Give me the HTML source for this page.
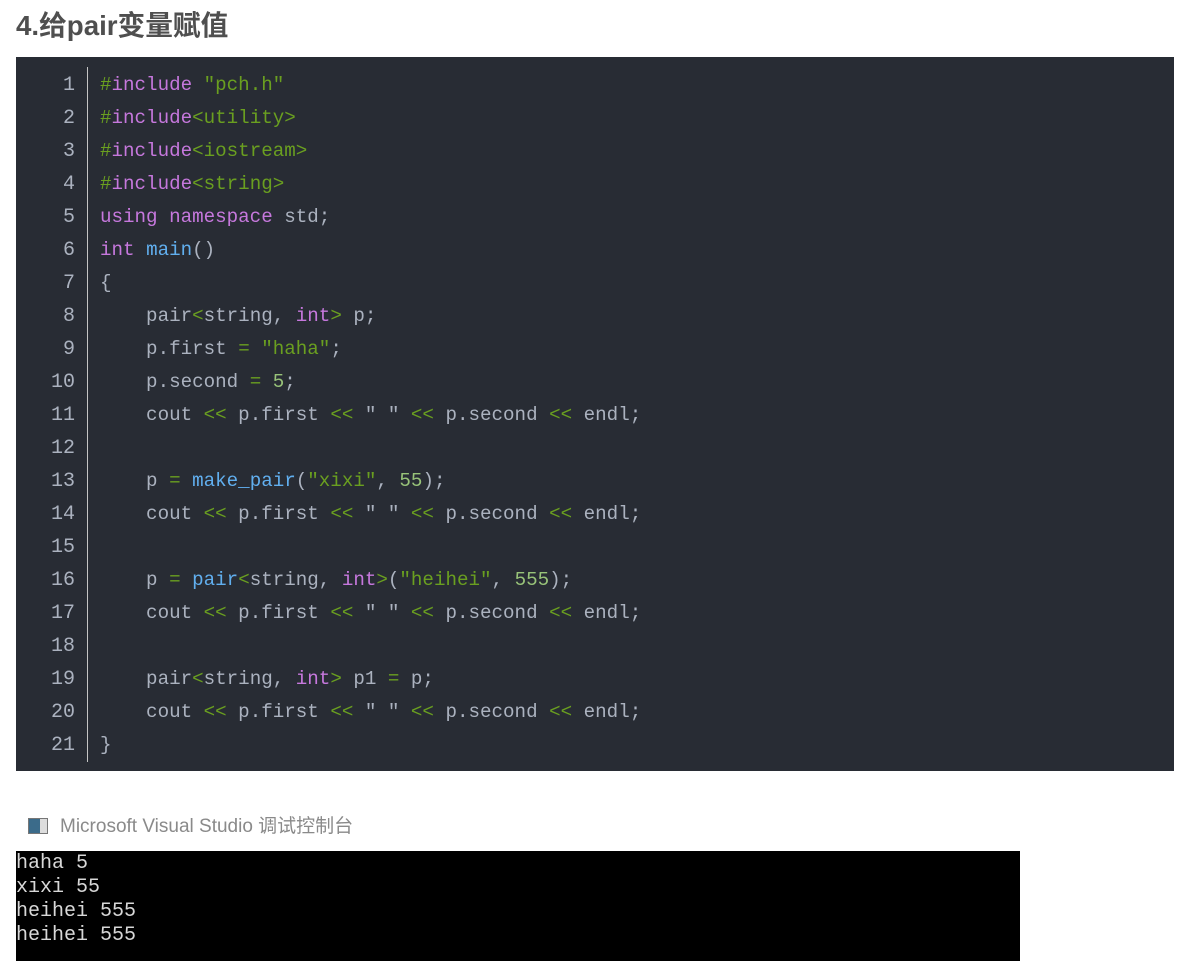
<!DOCTYPE html>
<html><head><meta charset="utf-8"><style>
body{margin:0;background:#fff;width:1192px;height:980px;overflow:hidden;font-family:"Liberation Sans","Noto Sans CJK SC",sans-serif}
h3{position:absolute;left:16px;top:7px;margin:0;font-size:27.7px;font-weight:bold;color:#4f4f4f;line-height:38px}
.code{position:absolute;left:16px;top:57px;width:1158px;height:714px;background:#282c34}
.nums{position:absolute;left:0;top:12px;width:59px;text-align:right;color:#abb2bf;font-family:"Liberation Mono",monospace;font-size:20px;line-height:33px}
.bar{position:absolute;left:71px;top:10px;height:695px;border-left:1px solid #c5c5c5}
pre{position:absolute;left:84px;top:12px;margin:0;font-family:"Liberation Mono",monospace;font-size:19.2px;line-height:33px;color:#abb2bf}
.k{color:#c678dd}.g{color:#6a9f20}.n{color:#98c379}.f{color:#61afef}
.title{position:absolute;left:28px;top:814px;font-size:19px;color:#8a8a8a;line-height:26px}
.ic{display:inline-block;width:20px;height:16px;border:1px solid #777;background:linear-gradient(90deg,#3b6b8a 0 60%,#ddd 60%);vertical-align:-2px;margin-right:12px;box-sizing:border-box}
.con{position:absolute;left:16px;top:851px;width:1004px;height:109px;background:#000;color:#d8d8d8;font-family:"Liberation Mono",monospace;font-size:20px;line-height:24px;white-space:pre;padding-top:1px}
</style></head><body>
<h3>4.给pair变量赋值</h3>
<div class="code">
<div class="nums">1<br>2<br>3<br>4<br>5<br>6<br>7<br>8<br>9<br>10<br>11<br>12<br>13<br>14<br>15<br>16<br>17<br>18<br>19<br>20<br>21</div>
<div class="bar"></div>
<pre><span class="g">#</span><span class="k">include</span> <span class="g">"pch.h"</span>
<span class="g">#</span><span class="k">include</span><span class="g">&lt;utility&gt;</span>
<span class="g">#</span><span class="k">include</span><span class="g">&lt;iostream&gt;</span>
<span class="g">#</span><span class="k">include</span><span class="g">&lt;string&gt;</span>
<span class="k">using namespace</span> std;
<span class="k">int</span> <span class="f">main</span>()
{
    pair<span class="g">&lt;</span>string, <span class="k">int</span><span class="g">&gt;</span> p;
    p.first <span class="g">=</span> <span class="g">"haha"</span>;
    p.second <span class="g">=</span> <span class="n">5</span>;
    cout <span class="g">&lt;&lt;</span> p.first <span class="g">&lt;&lt;</span> " " <span class="g">&lt;&lt;</span> p.second <span class="g">&lt;&lt;</span> endl;

    p <span class="g">=</span> <span class="f">make_pair</span>(<span class="g">"xixi"</span>, <span class="n">55</span>);
    cout <span class="g">&lt;&lt;</span> p.first <span class="g">&lt;&lt;</span> " " <span class="g">&lt;&lt;</span> p.second <span class="g">&lt;&lt;</span> endl;

    p <span class="g">=</span> <span class="f">pair</span><span class="g">&lt;</span>string, <span class="k">int</span><span class="g">&gt;</span>(<span class="g">"heihei"</span>, <span class="n">555</span>);
    cout <span class="g">&lt;&lt;</span> p.first <span class="g">&lt;&lt;</span> " " <span class="g">&lt;&lt;</span> p.second <span class="g">&lt;&lt;</span> endl;

    pair<span class="g">&lt;</span>string, <span class="k">int</span><span class="g">&gt;</span> p1 <span class="g">=</span> p;
    cout <span class="g">&lt;&lt;</span> p.first <span class="g">&lt;&lt;</span> " " <span class="g">&lt;&lt;</span> p.second <span class="g">&lt;&lt;</span> endl;
}</pre>
</div>
<div class="title"><span class="ic"></span>Microsoft Visual Studio 调试控制台</div>
<div class="con">haha 5
xixi 55
heihei 555
heihei 555</div>
</body></html>
